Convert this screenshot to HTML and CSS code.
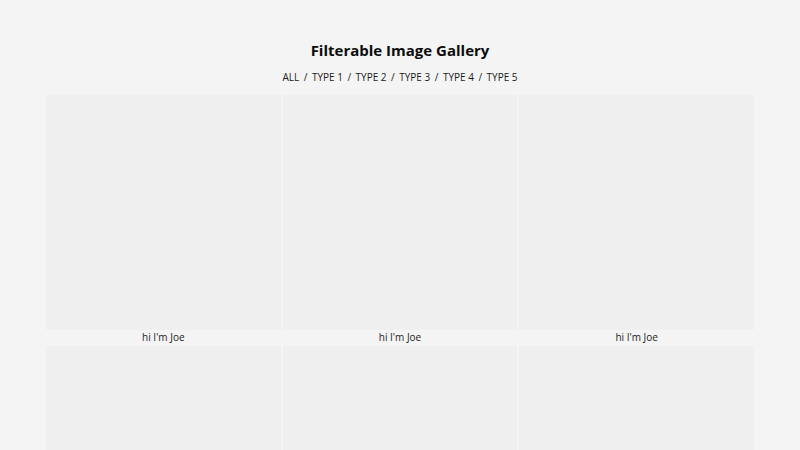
FILE: index.html
```html
<!DOCTYPE html>
<html lang="en">
<head>
<meta charset="utf-8">
<title>Filterable Image Gallery</title>
<link rel="stylesheet" href="styles.css">
</head>
<body>
  <header class="head">
    <h1 class="title">Filterable Image Gallery</h1>
    <nav class="filters">
      <a class="filter">ALL</a><span class="sep">/</span>
      <a class="filter">TYPE 1</a><span class="sep">/</span>
      <a class="filter">TYPE 2</a><span class="sep">/</span>
      <a class="filter">TYPE 3</a><span class="sep">/</span>
      <a class="filter">TYPE 4</a><span class="sep">/</span>
      <a class="filter">TYPE 5</a>
    </nav>
  </header>
  <main class="gallery">
    <figure class="item"><div class="pic"></div><figcaption class="cap">hi I'm Joe</figcaption></figure>
    <figure class="item"><div class="pic"></div><figcaption class="cap">hi I'm Joe</figcaption></figure>
    <figure class="item"><div class="pic"></div><figcaption class="cap">hi I'm Joe</figcaption></figure>
    <figure class="item"><div class="pic"></div><figcaption class="cap">hi I'm Joe</figcaption></figure>
    <figure class="item"><div class="pic"></div><figcaption class="cap">hi I'm Joe</figcaption></figure>
    <figure class="item"><div class="pic"></div><figcaption class="cap">hi I'm Joe</figcaption></figure>
  </main>
</body>
</html>
```
FILE: styles.css
```css
html, body {
  margin: 0;
  padding: 0;
}

body {
  background: #f4f4f4;
  color: #111;
  font-family: "Open Sans", "Noto Sans", sans-serif;
}

.head {
  display: flex;
  flex-direction: column;
  align-items: center;
  padding-top: 39px;
}

.title {
  margin: 0;
  font-size: 15px;
  font-weight: 700;
  line-height: 22px;
  color: #0c0c0c;
}

.filters {
  display: flex;
  gap: 4.5px;
  margin-top: 8px;
  font-size: 10px;
  line-height: 16px;
  color: #1a1a1a;
}

.filter {
  cursor: pointer;
}

.gallery {
  display: grid;
  grid-template-columns: repeat(3, 1fr);
  column-gap: 2px;
  margin: 10px 46px 0;
}

.item {
  margin: 0;
  display: flex;
  flex-direction: column;
}

.pic {
  aspect-ratio: 1 / 1;
  background: #efefef;
}

.cap {
  margin-bottom: 2px;
  text-align: center;
  font-size: 10px;
  line-height: 14px;
  color: #222;
}
```
